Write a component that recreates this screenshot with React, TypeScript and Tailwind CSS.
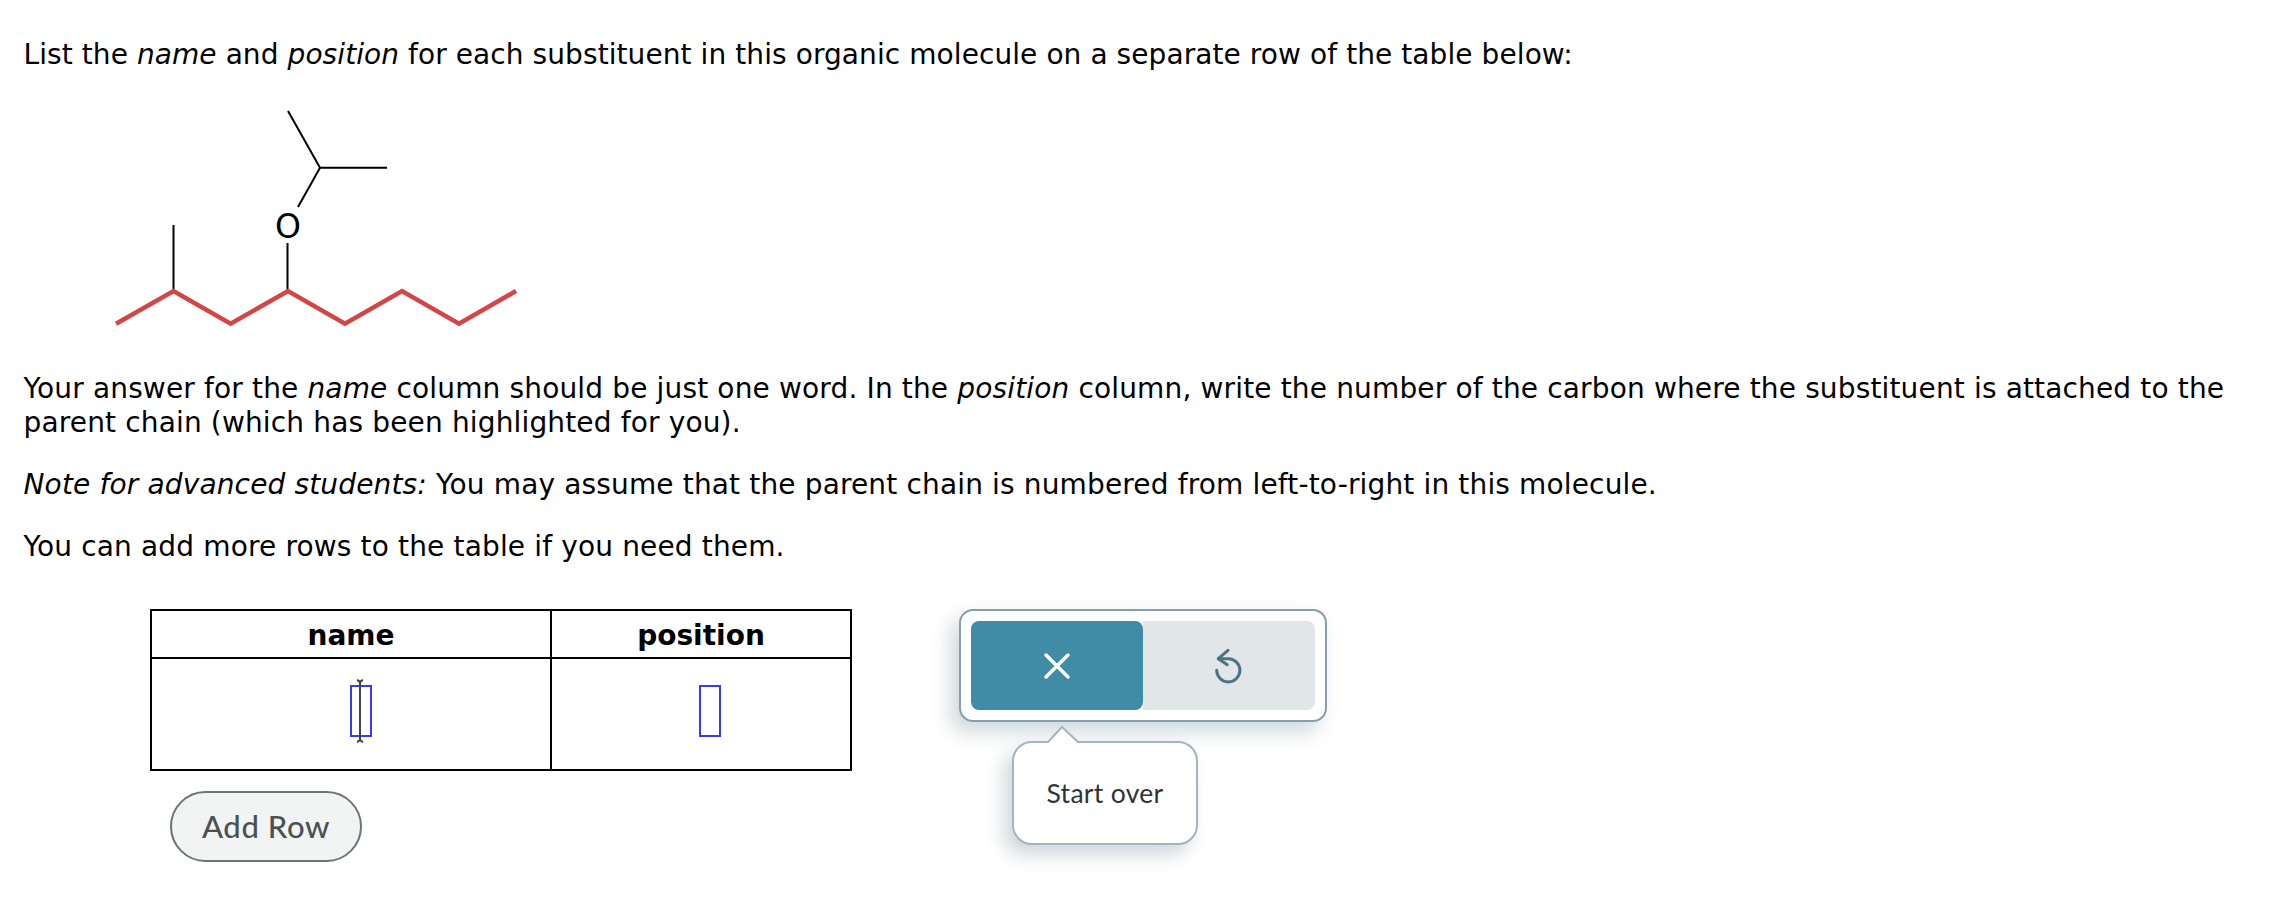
import React from 'react';

const Molecule = () => (
  <svg width="540" height="340" viewBox="0 0 540 340" className="block">
    <g fill="none" stroke="#000" strokeWidth="2">
      <polyline points="288,110 320,166.7 387,166.7" />
      <line x1="320" y1="166.7" x2="298" y2="206" />
      <line x1="287.5" y1="242" x2="287.5" y2="290" />
      <line x1="173.5" y1="224" x2="173.5" y2="290" />
    </g>
    <text x="288" y="236.5" textAnchor="middle" fontSize="33" fontFamily="'DejaVu Sans', sans-serif" fill="#000">O</text>
    <polyline
      points="116,322.7 173.5,290 230.6,322.7 288,290 345,322.7 402,290 459,322.7 516,290"
      fill="none"
      stroke="#d64545"
      strokeWidth="4.5"
    />
  </svg>
);

const MathInput = ({ focused }: { focused?: boolean }) => (
  <div className="relative h-[52px] w-[22px] border-[2px] border-[#3a3af5]">
    {focused && (
      <svg width="12" height="64" viewBox="0 0 12 64" className="absolute left-[3px] top-[-8px]">
        <path d="M2 1 Q5 2 5 4 Q5 2 8 1 M5 4 V60 M2 63 Q5 62 5 60 Q5 62 8 63" fill="none" stroke="#444" strokeWidth="2" />
      </svg>
    )}
  </div>
);

const App = () => {
  return (
    <div className="min-h-[912px] bg-white font-['DejaVu_Sans',sans-serif] text-[28px] leading-[34px] text-black">
      <div className="pl-[23.5px] pr-[30px] pt-[38px]">
        <p className="tracking-[0.08px]">
          List the <em>name</em> and <em>position</em> for each substituent in this organic molecule on a separate row of the table below:
        </p>
        <div className="-ml-[23.5px] mt-[-71px]">
          <Molecule />
        </div>
        <p className="mt-[31px] tracking-[0.15px]">
          Your answer for the <em>name</em> column should be just one word. In the <em>position</em> column, write the number of the carbon where the substituent is attached to the parent chain (which has been highlighted for you).
        </p>
        <p className="mt-[28px] tracking-[0.15px]">
          <em>Note for advanced students:</em> You may assume that the parent chain is numbered from left-to-right in this molecule.
        </p>
        <p className="mt-[28px] tracking-[0.15px]">You can add more rows to the table if you need them.</p>
      </div>

      <div className="mt-[45px] flex items-start pl-[150px]">
        <div className="w-[702px]">
          <table className="w-full table-fixed border-collapse">
            <thead>
              <tr className="h-[48px]">
                <th className="w-[400px] border-2 border-black p-0 pt-[3px] font-bold">name</th>
                <th className="border-2 border-black p-0 pt-[3px] font-bold">position</th>
              </tr>
            </thead>
            <tbody>
              <tr className="h-[112px]">
                <td className="border-2 border-black p-0">
                  <div className="flex justify-center pb-[6px] pl-[19px]">
                    <MathInput focused />
                  </div>
                </td>
                <td className="border-2 border-black p-0">
                  <div className="flex justify-center pb-[6px] pl-[17px]">
                    <MathInput />
                  </div>
                </td>
              </tr>
            </tbody>
          </table>
          <button className="ml-[20px] mt-[20px] flex h-[71px] w-[192px] items-center justify-center rounded-[36px] border-2 border-[#6b7476] bg-[#f2f4f3] pb-[2px] font-['Lato',sans-serif] text-[31px] font-medium tracking-[0.6px] text-[#4a5152]">
            Add Row
          </button>
        </div>

        <div className="relative ml-[107px]">
          <div className="flex h-[113px] w-[368px] rounded-[14px] border-2 border-[#84a0aa] bg-white p-[10px] shadow-[-8px_10px_20px_rgba(60,90,105,0.24)]">
            <div className="flex h-full w-[172px] items-center justify-center rounded-[8px] bg-[#408ca6]">
              <svg width="28" height="28" viewBox="0 0 28 28" fill="none" stroke="#fff" strokeWidth="3.5" strokeLinecap="round">
                <path d="M3 3 L25 25 M25 3 L3 25" />
              </svg>
            </div>
            <div className="flex h-full flex-1 items-center justify-center rounded-r-[8px] bg-[#e1e6e8]">
              <svg width="32" height="38" viewBox="0 0 32 38" fill="none" stroke="#4d7383" strokeWidth="3" strokeLinecap="round" strokeLinejoin="round">
                <path d="M15 3.3 L5.3 11.7 L14.3 17.7" />
                <path d="M5.3 11.7 H15.3 A11.6 11.6 0 1 1 3.7 23.3" />
              </svg>
            </div>
          </div>
          <div className="absolute left-[53px] top-[132px] flex h-[104px] w-[186px] items-center justify-center rounded-[20px] border-2 border-[#a3b5bd] bg-white font-['Lato',sans-serif] text-[26.5px] tracking-[0.3px] text-[#2e3436] shadow-[-8px_10px_18px_rgba(60,90,105,0.24)]">
            Start over
            <svg width="34" height="18" viewBox="0 0 34 18" className="absolute left-[32px] top-[-18px]">
              <path d="M0 17 H2 L16 2 L32 17 H34 V20 H0 Z" fill="#fff" />
              <path d="M0 17 H2 L16 2 L32 17 H34" fill="none" stroke="#a3b5bd" strokeWidth="2" />
            </svg>
          </div>
        </div>
      </div>
    </div>
  );
};

export default App;
